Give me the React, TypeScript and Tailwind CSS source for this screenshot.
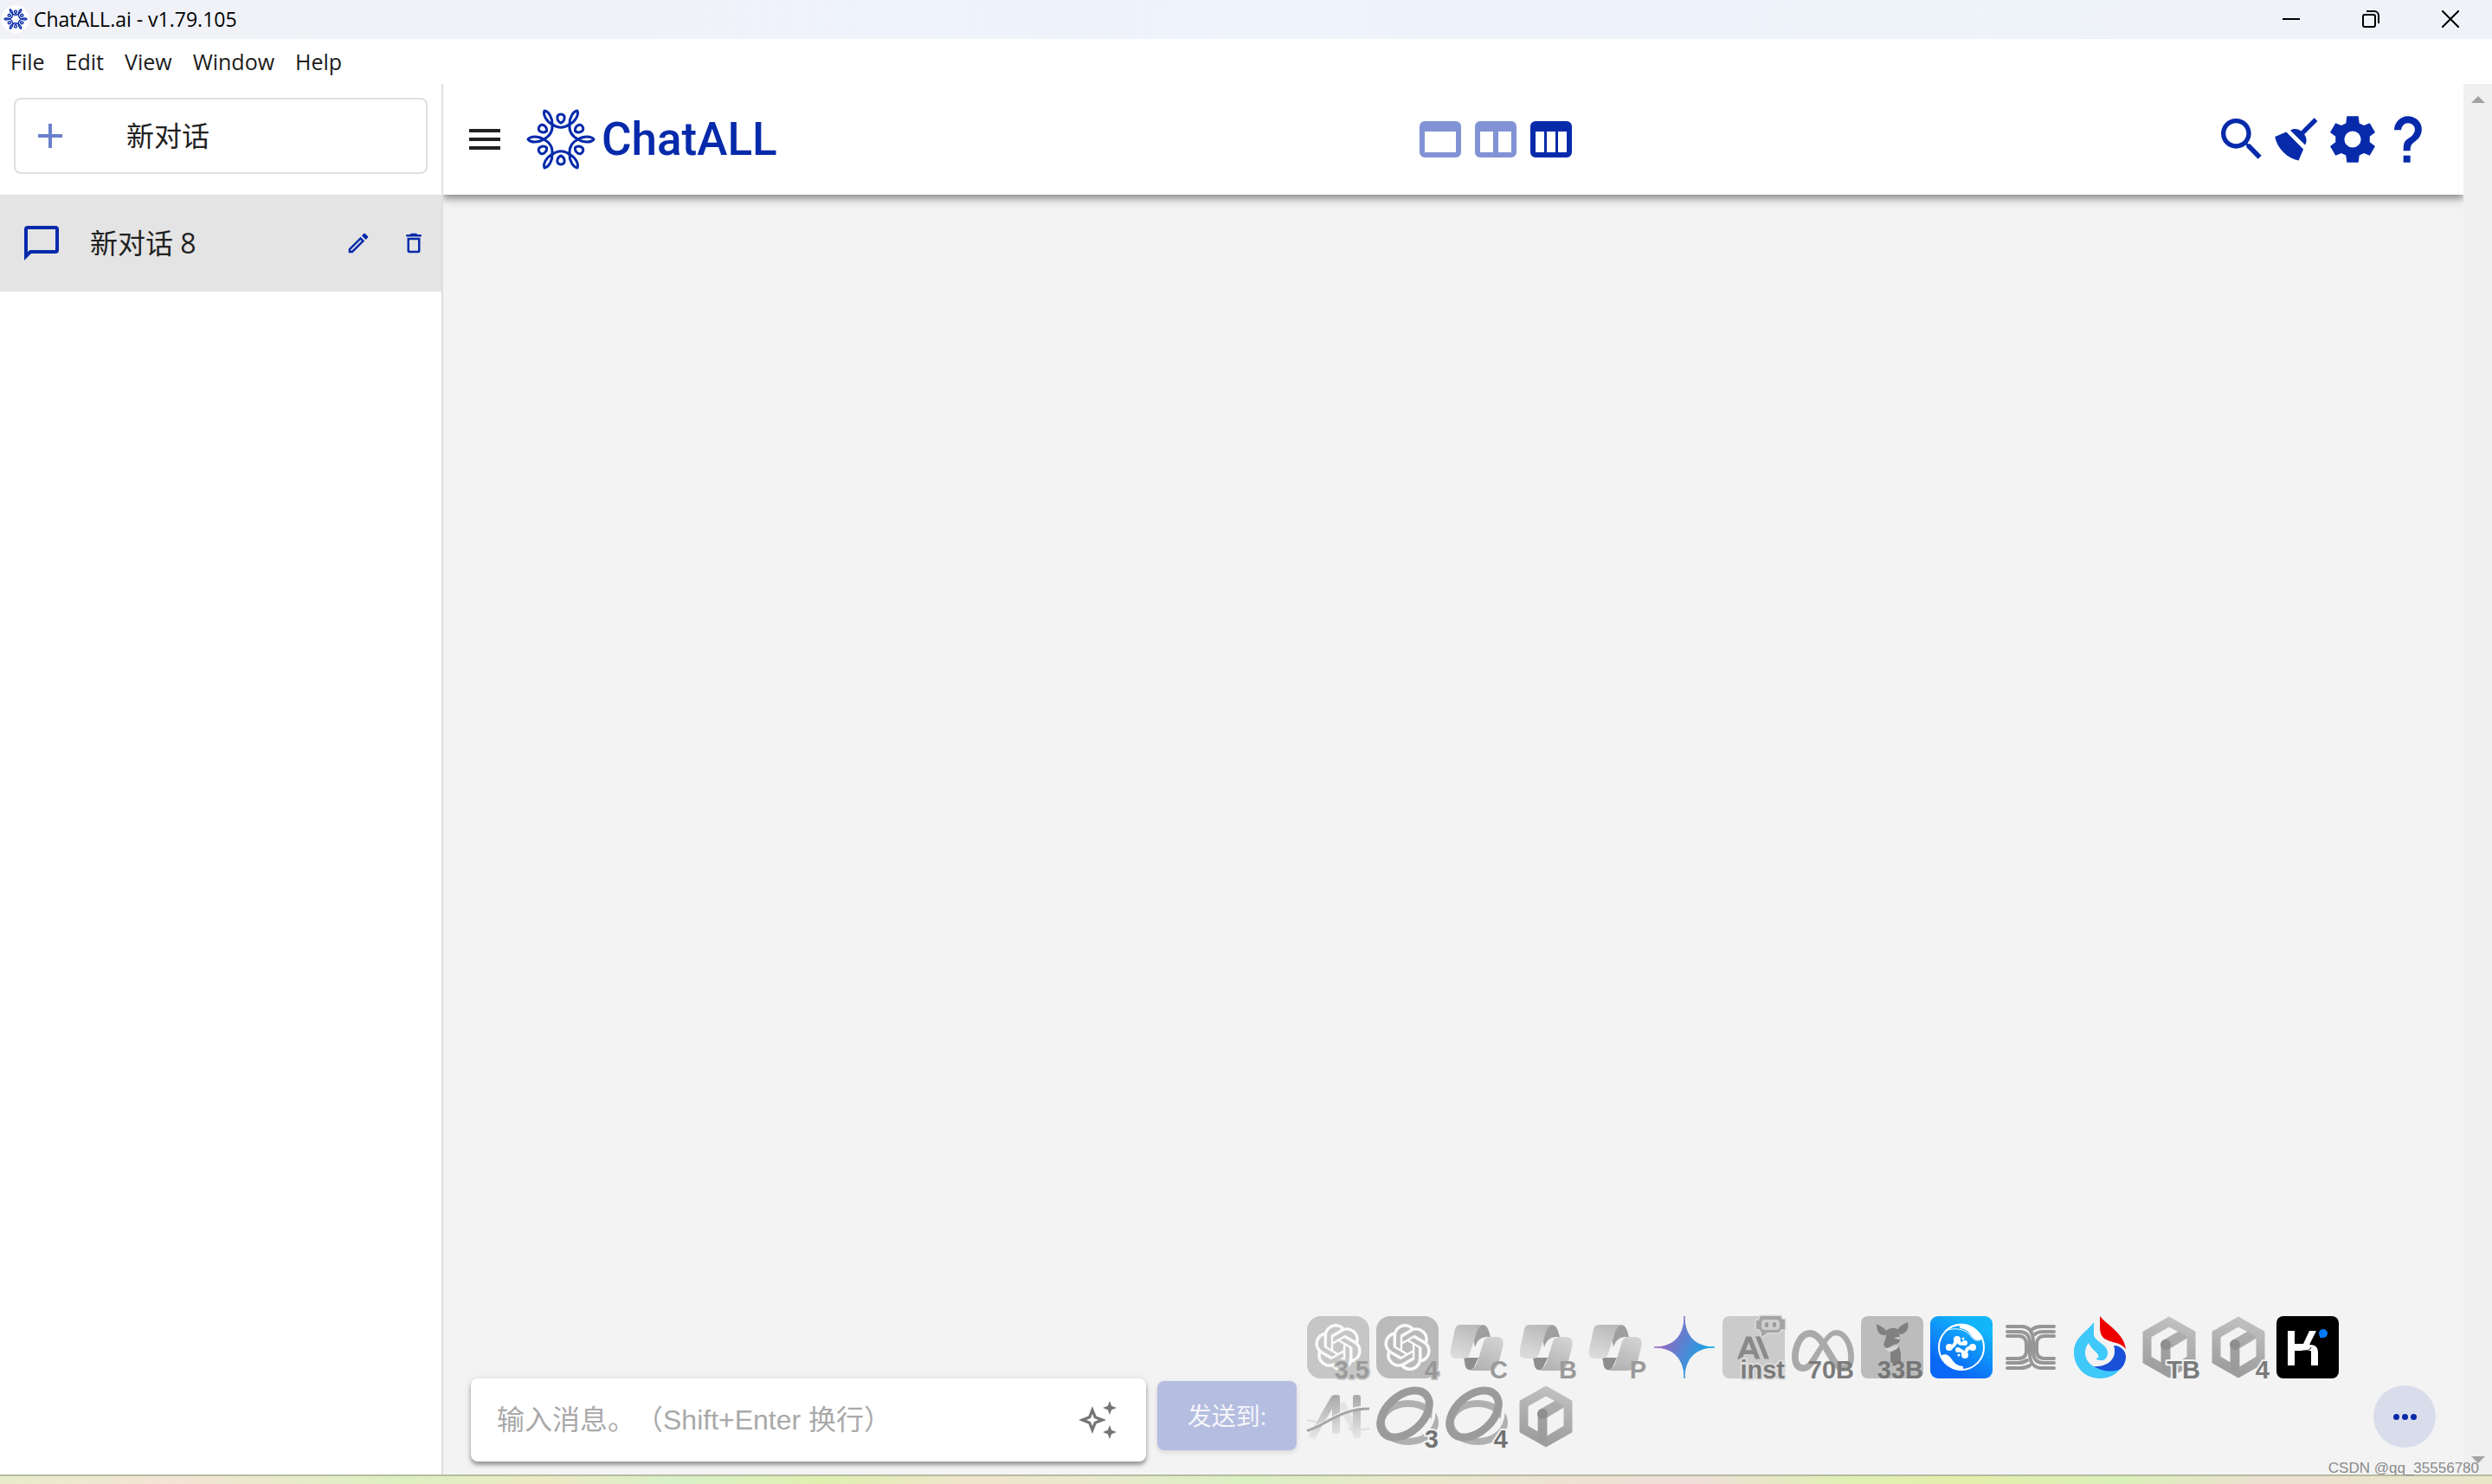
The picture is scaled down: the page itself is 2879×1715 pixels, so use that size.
import React, { useState } from 'react';
import { SiAnthropic, SiMeta, SiOpenai } from 'react-icons/si';

type IconProps = {
  className?: string;
};

const PATHS = {
  plus: 'M19,13H13V19H11V13H5V11H11V5H13V11H19V13Z',
  message:
    'M20,2H4A2,2 0 0,0 2,4V22L6,18H20A2,2 0 0,0 22,16V4A2,2 0 0,0 20,2M20,16H5.17L4,17.17V4H20V16Z',
  pencil:
    'M14.06,9L15,9.94L5.92,19H5V18.08L14.06,9M17.66,3C17.41,3 17.15,3.1 16.96,3.29L15.13,5.12L18.88,8.87L20.71,7.04C21.1,6.65 21.1,6 20.71,5.63L18.37,3.29C18.17,3.09 17.92,3 17.66,3M14.06,6.19L3,17.25V21H6.75L17.81,9.94L14.06,6.19Z',
  trash:
    'M6,19A2,2 0 0,0 8,21H16A2,2 0 0,0 18,19V7H6V19M8,9H16V19H8V9M15.5,4L14.5,3H9.5L8.5,4H5V6H19V4H15.5Z',
  menu: 'M3,6H21V8H3V6M3,11H21V13H3V11M3,16H21V18H3V16Z',
  magnify:
    'M9.5,3A6.5,6.5 0 0,1 16,9.5C16,11.11 15.41,12.59 14.44,13.73L14.71,14H15.5L20.5,19L19,20.5L14,15.5V14.71L13.73,14.44C12.59,15.41 11.11,16 9.5,16A6.5,6.5 0 0,1 3,9.5A6.5,6.5 0 0,1 9.5,3M9.5,5C7,5 5,7 5,9.5C5,12 7,14 9.5,14C12,14 14,12 14,9.5C14,7 12,5 9.5,5Z',
  broom:
    'M19.36,2.72L20.78,4.14L15.06,9.85C16.13,11.39 16.28,13.24 15.38,14.44L9.06,8.12C10.26,7.22 12.11,7.37 13.65,8.44L19.36,2.72M5.93,17.57C3.92,15.56 2.69,13.16 2.35,10.92L7.23,8.83L14.67,16.27L12.58,21.15C10.34,20.81 7.94,19.58 5.93,17.57Z',
  cog: 'M9.5 2H14.5L14.9 5.1L16.9 6L19.4 5L21.75 9L19.4 10.8V13.2L21.75 15L19.4 19L16.9 18L14.9 18.9L14.5 22H9.5L9.1 18.9L7.1 18L4.6 19L2.25 15L4.6 13.2V10.8L2.25 9L4.6 5L7.1 6L9.1 5.1ZM12 8.4A3.6 3.6 0 0 0 12 15.6A3.6 3.6 0 0 0 12 8.4Z',
  help: 'M10,19H13V22H10V19M12,2C17.35,2.22 19.68,7.62 16.5,11.67C15.67,12.67 14.33,13.33 13.67,14.17C13,15 13,16 13,17H10C10,15.33 10,13.92 10.67,12.92C11.33,11.92 12.67,11.33 13.5,10.67C15.92,8.43 15.32,5.26 12,5A3,3 0 0,0 9,8H6A6,6 0 0,1 12,2Z',
};

function Icon({ name, className }: IconProps & { name: keyof typeof PATHS }) {
  return (
    <svg viewBox="0 0 24 24" className={className} fill="currentColor" fillRule="evenodd" aria-hidden="true">
      <path d={PATHS[name]} />
    </svg>
  );
}

function FlowerLogo({ className, strokeWidth = 3 }: IconProps & { strokeWidth?: number }) {
  return (
    <svg
      viewBox="-41 -41 82 82"
      className={className}
      fill="none"
      stroke="#062aaa"
      strokeWidth={strokeWidth}
      strokeLinejoin="round"
      aria-hidden="true"
    >
      {[0, 60, 120, 180, 240, 300].map((angle) => (
        <g key={angle} transform={`rotate(${angle})`}>
          <path d="M20 0C26 -4 35 -4 38 0C35 4 26 4 20 0Z" />
          <path d="M20 0Q9 5 10 17.3" />
          <path transform="rotate(30)" d="M19 0C21 -5 29 -6 29 0C29 6 21 5 19 0Z" />
        </g>
      ))}
    </svg>
  );
}

function ColumnsIcon({ count, className }: IconProps & { count: number }) {
  const holes: Record<number, string> = {
    1: 'M6 12H42V36H6Z',
    2: 'M6 12H21V36H6ZM27 12H42V36H27Z',
    3: 'M6 12H16V36H6ZM19 12H29V36H19ZM32 12H42V36H32Z',
  };
  return (
    <svg viewBox="0 0 48 42" className={className} fill="#062aaa" fillRule="evenodd" aria-hidden="true">
      <path d={`M6 0H42A6 6 0 0 1 48 6V36A6 6 0 0 1 42 42H6A6 6 0 0 1 0 36V6A6 6 0 0 1 6 0Z${holes[count]}`} />
    </svg>
  );
}

function Badge({ children, color = '#7b7b7b', halo = '#f3f3f3' }: { children: string; color?: string; halo?: string }) {
  return (
    <text
      x="72"
      y="72"
      textAnchor="end"
      fontFamily="Liberation Sans, Arial, sans-serif"
      fontWeight="700"
      fontSize="29"
      fill={color}
      stroke={halo}
      strokeWidth="4"
      strokeLinejoin="round"
      paintOrder="stroke"
    >
      {children}
    </text>
  );
}

function OpenAiArt({ label, bg, color }: { label: string; bg: string; color: string }) {
  return (
    <>
      <rect width="72" height="72" rx="16" fill={bg} />
      <SiOpenai x={9} y={9} size={54} color="#fafafa" />
      <Badge color={color} halo={bg}>{label}</Badge>
    </>
  );
}

function CopilotArt({ label }: { label: string }) {
  return (
    <>
      <defs>
        <linearGradient id={`cp-a-${label}`} x1="0.6" y1="0" x2="0.3" y2="1">
          <stop offset="0" stopColor="#b9b9b9" />
          <stop offset="0.5" stopColor="#cccccc" />
          <stop offset="1" stopColor="#dcdcdc" />
        </linearGradient>
        <linearGradient id={`cp-b-${label}`} x1="0.7" y1="0" x2="0.3" y2="1">
          <stop offset="0" stopColor="#d2d2d2" />
          <stop offset="1" stopColor="#b2b2b2" />
        </linearGradient>
      </defs>
      <path d="M42 10C49 10 50 17 52 24H47C41 25 37 27 34 36L32 26C35 17 37 10 42 10Z" fill="#9f9f9f" />
      <path d="M20 48H38L33 59C31 63 25 64 23 58C22 54 22 49 20 48Z" fill="#8e8e8e" />
      <path d="M17 10H44C38 11 36 18 34 25L28 43C27 47 24 49 20 49H13C6 49 5 45 6 38L10 20C11 14 12 10 17 10Z" fill={`url(#cp-a-${label})`} />
      <path d="M52 24H58C66 24 68 28 66 36L62 52C60 59 57 63 50 63H28C33 62 36 56 38 49L43 33C44 28 46 24 52 24Z" fill={`url(#cp-b-${label})`} />
      <Badge color="#9a9a9a" halo="none">{label}</Badge>
    </>
  );
}

function GeminiArt() {
  return (
    <>
      <defs>
        <linearGradient id="gemini" x1="0.05" y1="0.35" x2="0.85" y2="0.7">
          <stop offset="0.05" stopColor="#9a66bf" />
          <stop offset="0.5" stopColor="#5a82d2" />
          <stop offset="1" stopColor="#13a6e5" />
        </linearGradient>
      </defs>
      <path d="M36 0C36 23 49 36 71 36C49 36 36 49 36 72C36 49 23 36 1 36C23 36 36 23 36 0Z" fill="url(#gemini)" stroke="url(#gemini)" />
    </>
  );
}

function ClaudeArt() {
  return (
    <>
      <rect width="72" height="72" rx="8" fill="#cbcbcb" />
      <path
        d="M44 0H67L69 4H72V15H68L65 19H52L45 24V19L42 15H39V5H42Z"
        fill="#a4a4a4"
        stroke="#d9d9d9"
        strokeWidth="3"
        paintOrder="stroke"
      />
      <rect x="45" y="4" width="21" height="12" rx="4" fill="#cdcdcd" />
      <rect x="49" y="7" width="4" height="6" rx="2" fill="#999999" />
      <rect x="58" y="7" width="4" height="6" rx="2" fill="#999999" />
      <SiAnthropic x={17} y={18} size={37} color="#8a8a8a" />
      <Badge halo="#dddddd">inst</Badge>
    </>
  );
}

function LlamaArt() {
  return (
    <>
      <SiMeta x={0} y={4} size={72} color="#aaaaaa" />
      <Badge halo="none">70B</Badge>
    </>
  );
}

function VicunaArt() {
  return (
    <>
      <rect width="72" height="72" rx="8" fill="#bcbcbc" />
      <g fill="#808080">
        <path d="M18 9C23 12 28 14 30 18L28 22C21 23 18 17 18 9Z" />
        <path d="M54 7C49 9 43 12 42 17L45 21C52 21 56 14 54 7Z" />
        <path d="M28 18C32 13 41 12 44 17L45 28C44 32 41 32 38 33C33 35 31 38 28 36L26 33L29 24Z" />
        <path d="M34 42C37 40 42 39 44 35L46 43V54H34Z" />
      </g>
      <path d="M38 25L45 24L44 27Z" fill="#dadada" />
      <path d="M27 37C34 38 37 34 43 34C42 38 36 40 32 41Z" fill="#d6d6d6" />
      <Badge color="#757575" halo="none">33B</Badge>
    </>
  );
}

function BlueArt() {
  return (
    <>
      <defs>
        <linearGradient id="blue-bg" x1="0.65" y1="0.1" x2="0.25" y2="0.8">
          <stop offset="0" stopColor="#12b5fa" />
          <stop offset="1" stopColor="#0b68f6" />
        </linearGradient>
      </defs>
      <rect width="72" height="72" rx="9" fill="url(#blue-bg)" />
      <circle cx="36" cy="36" r="26" fill="none" stroke="#ffffff" strokeWidth="2" />
      <path d="M17 17C30 12 41 16 46 22C50 28 55 30 60 26A26 26 0 0 0 17 17Z" fill="none" stroke="#ffffff" />
      <path d="M34 14C42 15 44 18 47 22C51 28 55 29 60 26A26 26 0 0 0 34 10Z" fill="#ffffff" />
      <path d="M34 14C42 15 44 18 47 22C51 28 55 29 60 26A26 26 0 0 0 34 10Z" fill="#ffffff" transform="rotate(180 36 36)" />
      <g fill="none" stroke="#ffffff" strokeWidth="4" strokeLinecap="round" strokeLinejoin="round">
        <path d="M22 36C27 36 28 33 31 27C33 33 37 32 40 31" />
        <path d="M32 39C36 39 38 41 40 45C42 37 44 36 49 36" />
      </g>
      <g fill="#ffffff">
        <circle cx="22" cy="36" r="4" />
        <circle cx="31" cy="27" r="4" />
        <circle cx="40" cy="31" r="3" />
        <circle cx="32" cy="39" r="3" />
        <circle cx="40" cy="45" r="4" />
        <circle cx="49" cy="36" r="4" />
        <circle cx="38" cy="26" r="1.5" />
        <circle cx="33" cy="45" r="1.5" />
      </g>
    </>
  );
}

function PipesArt() {
  return (
    <g fill="none" stroke="#969696" strokeWidth="4" strokeLinecap="round">
      <path d="M9 23H22C28 23 31 27 31 32V40C31 46 28 49 22 49H9" />
      <path d="M63 23H52C46 23 43 27 43 32V40C43 46 46 49 52 49H63" />
      <path d="M9 18H23C32 18 35 24 35 31V43C35 55 40 60 50 60H63" />
      <path d="M9 12H25C36 12 39 20 39 30V41C39 50 43 54 51 54H63" />
      <path d="M63 12H48C43 12 41 13 38 15" />
      <path d="M63 18H50C46 18 43 19 41 21" />
      <path d="M9 54H22C26 54 29 53 32 51" />
      <path d="M9 60H24C29 60 32 59 35 57" />
    </g>
  );
}

function SparkArt() {
  return (
    <>
      <path d="M29 7V22C30 29 45 33 45 42C45 48 41 52 37 51C34 51 32 50 31 49C34 49 35 47 34 45C33 42 26 38 23 31C20 35 19 38 19 42C19 50 24 57 33 60C43 63 53 63 60 60C55 68 46 72 36 72C18 72 6 58 6 42C6 25 20 19 29 7Z" fill="#3fc8fa" />
      <path d="M36 0C44 10 64 20 66 38C60 30 50 31 43 27C37 24 36 18 36 12Z" fill="#ee0000" />
      <path d="M52 34C60 34 66 40 66 47C66 54 62 59 60 61C50 66 37 63 29 58C44 59 57 50 52 34Z" fill="#1850d8" />
    </>
  );
}

function HexArt({ id, label }: { id: string; label?: string }) {
  return (
    <>
      <defs>
        <linearGradient id={id} x1="0.6" y1="0" x2="0.4" y2="1">
          <stop offset="0" stopColor="#c2c2c2" />
          <stop offset="1" stopColor="#9a9a9a" />
        </linearGradient>
      </defs>
      <path
        d="M36 1L66 18V54L36 71L6 54V18ZM15 24V47L27 54V35C26 31 28 29 31 27L47 18L36 12ZM37 37V59L57 47V25Z"
        fill={`url(#${id})`}
        stroke={`url(#${id})`}
        strokeWidth="1"
        strokeLinejoin="round"
        fillRule="evenodd"
      />
      <path d="M27 34H37V62L32 65L27 62Z" fill="#989898" opacity="0.6" />
      <path d="M30 28L47 18L57 24L36 37Z" fill="#a8a8a8" opacity="0.7" />
      <circle cx="32" cy="33" r="6" fill="#8e8e8e" />
      {label && <Badge>{label}</Badge>}
    </>
  );
}

function KimiArt() {
  return (
    <>
      <rect width="72" height="72" rx="8" fill="#000000" />
      <path d="M13 17H21V32H31L38 17H46L38 33C45 33 48 36 48 42V57H40V40H21V57H13Z" fill="#ffffff" />
      <path d="M30 40C36 40 39 39 40 36" stroke="#000000" fill="none" />
      <circle cx="54" cy="20" r="5" fill="#027aff" />
      <path d="M50 20V25H54Z" fill="#027aff" />
    </>
  );
}

function SwooshArt() {
  return (
    <>
      <defs>
        <linearGradient id="swoosh" x1="0" y1="11" x2="0" y2="62" gradientUnits="userSpaceOnUse">
          <stop offset="0" stopColor="#a8a8a8" />
          <stop offset="1" stopColor="#e8e8e8" />
        </linearGradient>
      </defs>
      <path d="M39 20L57 54" stroke="#e4e4e4" strokeWidth="9" />
      <path d="M5 61L32 14" stroke="url(#swoosh)" strokeWidth="8" />
      <rect x="29" y="11" width="9" height="45" rx="3" fill="url(#swoosh)" />
      <rect x="53" y="11" width="9" height="50" rx="3" fill="url(#swoosh)" />
      <path d="M0 40L10 42M48 50C56 53 64 52 72 50" stroke="#dddddd" strokeWidth="2" fill="none" />
      <path d="M0 51C24 44 38 25 72 24" stroke="#f3f3f3" strokeWidth="2" fill="none" />
      <path d="M0 52.5C24 45 38 27 72 27" stroke="#a5a5a5" strokeWidth="3" fill="none" />
    </>
  );
}

function RingsArt({ label }: { label: string }) {
  return (
    <>
      <ellipse cx="37" cy="43" rx="31" ry="22" fill="none" stroke="#b0b0b0" strokeWidth="8" />
      <path d="M60 50C66 42 68 34 66 24" stroke="#f3f3f3" strokeWidth="4" fill="none" />
      <ellipse cx="33" cy="33" rx="33" ry="21" fill="none" stroke="#9b9b9b" strokeWidth="9" transform="rotate(-42 33 33)" />
      <Badge color="#727272">{label}</Badge>
    </>
  );
}

const BOTS: { name: string; art: React.ReactNode }[] = [
  { name: 'GPT-3.5', art: <OpenAiArt label="3.5" bg="#c6c6c6" color="#9a9a9a" /> },
  { name: 'GPT-4', art: <OpenAiArt label="4" bg="#bababa" color="#969696" /> },
  { name: 'Copilot Creative', art: <CopilotArt label="C" /> },
  { name: 'Copilot Balanced', art: <CopilotArt label="B" /> },
  { name: 'Copilot Precise', art: <CopilotArt label="P" /> },
  { name: 'Gemini', art: <GeminiArt /> },
  { name: 'Claude Instant', art: <ClaudeArt /> },
  { name: 'Llama 70B', art: <LlamaArt /> },
  { name: 'Vicuna 33B', art: <VicunaArt /> },
  { name: 'SkyWork', art: <BlueArt /> },
  { name: 'Pi', art: <PipesArt /> },
  { name: 'Spark', art: <SparkArt /> },
  { name: 'Qianfan Turbo', art: <HexArt id="hex-tb" label="TB" /> },
  { name: 'Qianfan 4', art: <HexArt id="hex-4" label="4" /> },
  { name: 'Kimi', art: <KimiArt /> },
  { name: 'MOSS', art: <SwooshArt /> },
  { name: 'ChatGLM 3', art: <RingsArt label="3" /> },
  { name: 'ChatGLM 4', art: <RingsArt label="4" /> },
  { name: 'Qianfan', art: <HexArt id="hex" /> },
];

function TitleBar() {
  return (
    <div className="flex h-[45px] shrink-0 items-center justify-between bg-linear-to-r from-[#f1f2f7] via-[#eef3fc] to-[#eff3f8] pr-[2px] pb-[2px] pl-[2px]">
      <div className="flex items-center gap-[5px]">
        <span className="flex size-8 items-center justify-center rounded-full bg-white">
          <FlowerLogo className="size-7" strokeWidth={4} />
        </span>
        <span className="text-[23px] leading-8 text-black">ChatALL.ai - v1.79.105</span>
      </div>
      <div className="flex h-full">
        <button aria-label="Minimize" className="flex w-[92px] items-center justify-center">
          <svg viewBox="0 0 20 20" className="size-5" fill="none" stroke="#000" strokeWidth="2">
            <path d="M0 10H20" />
          </svg>
        </button>
        <button aria-label="Restore" className="flex w-[92px] items-center justify-center">
          <svg viewBox="0 0 20 20" className="size-5" fill="none" stroke="#000" strokeWidth="2">
            <rect x="1" y="5" width="14" height="14" rx="2" />
            <path d="M5 1H14A5 5 0 0 1 19 6V15" />
          </svg>
        </button>
        <button aria-label="Close" className="flex w-[92px] items-center justify-center">
          <svg viewBox="0 0 20 20" className="size-5" fill="none" stroke="#000" strokeWidth="2">
            <path d="M0 0L20 20M20 0L0 20" />
          </svg>
        </button>
      </div>
    </div>
  );
}

function MenuBar() {
  return (
    <nav className="flex h-[52px] shrink-0 items-center gap-6 bg-white px-3 text-[25px] leading-8 text-[#1b1b1b]">
      {['File', 'Edit', 'View', 'Window', 'Help'].map((item) => (
        <button key={item}>{item}</button>
      ))}
    </nav>
  );
}

function Sidebar() {
  return (
    <aside className="w-[512px] shrink-0 border-r-2 border-[#dfdfdf] bg-white">
      <div className="px-4 pt-4 pb-6">
        <button className="flex h-[88px] w-full items-center gap-16 rounded-lg border-2 border-[#e0e0e0] px-4 text-[32px] text-[#212121]">
          <Icon name="plus" className="size-12 text-[#6a80cc]" />
          新对话
        </button>
      </div>
      <div className="flex h-28 items-center bg-[#e4e4e4] pr-[17px] pl-6">
        <Icon name="message" className="size-12 text-[#062aaa]" />
        <span className="ml-8 flex-1 text-[32px] text-[#212121]">新对话 8</span>
        <div className="flex gap-[34px]">
          <button aria-label="Rename">
            <Icon name="pencil" className="size-[30px] text-[#062aaa]" />
          </button>
          <button aria-label="Delete">
            <Icon name="trash" className="size-[30px] text-[#062aaa]" />
          </button>
        </div>
      </div>
    </aside>
  );
}

function Header({ columns, onColumns }: { columns: number; onColumns: (n: number) => void }) {
  return (
    <header className="flex h-32 shrink-0 items-center justify-between bg-white pr-8 pl-6 shadow-[0_4px_8px_rgba(0,0,0,0.35),0_2px_16px_rgba(0,0,0,0.2)]">
      <div className="flex items-center">
        <button aria-label="Menu">
          <Icon name="menu" className="size-12 text-[#212121]" />
        </button>
        <FlowerLogo className="ml-[23px] size-[82px]" />
        <span className="ml-[6px] font-[Roboto] text-[53px] leading-none font-medium text-[#062aaa]">ChatALL</span>
      </div>
      <div className="flex gap-4">
        {[1, 2, 3].map((n) => (
          <button key={n} aria-label={`${n} columns`} onClick={() => onColumns(n)} className={n === columns ? '' : 'opacity-50'}>
            <ColumnsIcon count={n} className="h-[42px] w-12" />
          </button>
        ))}
      </div>
      <div className="flex text-[#062aaa]">
        <button aria-label="Search"><Icon name="magnify" className="size-16" /></button>
        <button aria-label="Clear"><Icon name="broom" className="size-16" /></button>
        <button aria-label="Settings"><Icon name="cog" className="size-16" /></button>
        <button aria-label="Help"><Icon name="help" className="size-16" /></button>
      </div>
    </header>
  );
}

function Footer() {
  return (
    <footer className="flex items-end pr-8 pb-[15px] pl-8">
      <div className="flex h-24 w-[780px] items-center rounded-lg bg-white pr-8 shadow-[0_4px_4px_rgba(0,0,0,0.3),0_2px_8px_rgba(0,0,0,0.15)]">
        <textarea
          aria-label="Message"
          rows={1}
          placeholder="输入消息。（Shift+Enter 换行）"
          className="h-12 min-w-0 flex-1 resize-none overflow-hidden pl-[30px] font-[Liberation_Sans,Noto_Sans_CJK_SC,sans-serif] text-[32px] leading-[48px] outline-none [text-spacing-trim:space-all] placeholder:text-[#a9a9a9]"
        />
        <button aria-label="Prompts">
          <svg viewBox="0 0 48 48" className="size-12" fill="#757575" fillRule="evenodd">
            <path d="M18 8L22.5 19.5L34 24L22.5 28.5L18 40L13.5 28.5L2 24L13.5 19.5ZM18 17L16 22L11 24L16 26L18 31L20 26L25 24L20 22Z" />
            <path d="M38 2L40.2 7.8L46 10L40.2 12.2L38 18L35.8 12.2L30 10L35.8 7.8Z" />
            <path d="M38 30L40.2 35.8L46 38L40.2 40.2L38 46L35.8 40.2L30 38L35.8 35.8Z" />
          </svg>
        </button>
      </div>
      <button
        disabled
        className="mb-[13px] ml-[13px] h-20 w-[161px] shrink-0 rounded-lg bg-[#b5bee0] text-[28px] text-[#f5f6fb] shadow-[0_2px_6px_rgba(0,0,0,0.12)]"
      >
        发送到:
      </button>
      <div className="mb-4 ml-3 flex min-w-0 flex-1 flex-wrap gap-2">
        {BOTS.map((bot) => (
          <button key={bot.name} aria-label={bot.name}>
            <svg viewBox="0 0 72 72" className="size-[72px] overflow-visible">
              {bot.art}
            </svg>
          </button>
        ))}
      </div>
      <button aria-label="More" className="mb-4 flex size-[72px] shrink-0 items-center justify-center gap-[3px] rounded-full bg-[#d9dcea]">
        <span className="size-[7px] rounded-full bg-[#062aaa]" />
        <span className="size-[7px] rounded-full bg-[#062aaa]" />
        <span className="size-[7px] rounded-full bg-[#062aaa]" />
      </button>
    </footer>
  );
}

function Scrollbar() {
  return (
    <div className="flex w-[33px] shrink-0 flex-col items-center justify-between bg-[#f0f0f0] pt-[14px] pb-[13px]">
      <svg viewBox="0 0 16 8" className="h-2 w-4" fill="#a3a3a3"><path d="M8 0L16 8H0Z" /></svg>
      <svg viewBox="0 0 16 8" className="h-2 w-4" fill="#a3a3a3"><path d="M0 0H16L8 8Z" /></svg>
    </div>
  );
}

export default function App() {
  const [columns, setColumns] = useState(3);

  return (
    <div className="relative flex h-screen flex-col overflow-hidden bg-white font-[Open_Sans,Noto_Sans_CJK_SC,sans-serif]">
      <TitleBar />
      <MenuBar />
      <div className="flex min-h-0 flex-1">
        <Sidebar />
        <main className="flex min-w-0 flex-1 flex-col justify-between overflow-hidden bg-[#f3f3f3]">
          <Header columns={columns} onColumns={setColumns} />
          <Footer />
        </main>
        <Scrollbar />
      </div>
      {/* Strip of desktop wallpaper below the window */}
      <div className="h-[11px] shrink-0 border-t-2 border-[#b5bba2] bg-[linear-gradient(90deg,#e8eccb_0%,#f4e4d5_7%,#dcf0c0_16%,#ece8c4_22%,#d8f0c8_27%,#dff0b0_33%,#efe4cc_39%,#e8e8cc_44%,#daf0c2_50%,#ebe6cc_57%,#efdfd9_68%,#e0f0b4_74%,#e4eeac_79%,#d9f0b8_85%,#ecdfd0_91%,#e9e6c8_100%)]" />
      <span className="absolute right-[15px] bottom-[8px] font-[Liberation_Sans,sans-serif] text-[17px] leading-5 text-[#8a8a8a]">
        CSDN @qq_35556780
      </span>
    </div>
  );
}
